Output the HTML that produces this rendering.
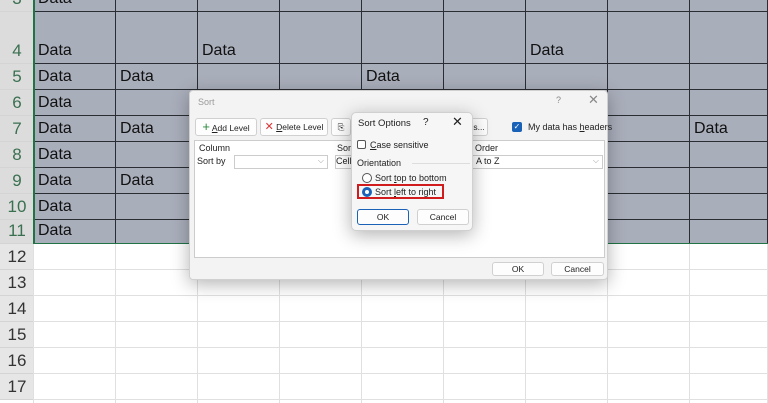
<!DOCTYPE html><html><head><style>
*{margin:0;padding:0;box-sizing:border-box}
body{width:768px;height:403px;overflow:hidden;background:#fff;font-family:"Liberation Sans",sans-serif;position:relative}
.a{position:absolute;white-space:nowrap}
.rh{position:absolute;left:0;width:34px;background:#e6e6e6;color:#333;font-size:17px;text-align:center;border-bottom:1px solid #d4d4d4}
.rh span{position:absolute;bottom:2px;left:0;right:0}
.sel{color:#3a7050;background:#dcdcdc}
.d{position:absolute;font-size:16px;color:#111}
.dlg{position:absolute;background:#f3f3f3;border:1px solid #d0d0d0;border-radius:4px;box-shadow:0 4px 18px rgba(0,0,0,.3);font-size:9px;color:#222}
.btn{position:absolute;background:#fdfdfd;border:1px solid #d0d0d0;border-radius:3px;font-size:8.5px;text-align:center;white-space:nowrap}
</style></head><body>
<div class="a" style="left:34px;top:0;width:734px;height:244px;background:#a9aebb"></div>
<div id="g"></div>
<script>
var rows=[[-14,12,3],[12,64,4],[64,90,5],[90,116,6],[116,142,7],[142,168,8],[168,194,9],[194,220,10],[220,244,11],[244,270,12],[270,296,13],[296,322,14],[322,348,15],[348,374,16],[374,400,17]];
var cols=[34,116,198,280,362,444,526,608,690,768];
var h='';
rows.forEach(function(r){
 var s=r[2]<=11;
 h+='<div class="rh'+(s?' sel':'')+'" style="top:'+r[0]+'px;height:'+(r[1]-r[0])+'px"><span>'+r[2]+'</span></div>';
 h+='<div class="a" style="left:34px;width:734px;top:'+(r[1]-1)+'px;height:1px;background:'+(s?'#2a2d33':'#e0e0e0')+'"></div>';
});
cols.forEach(function(c){
 h+='<div class="a" style="left:'+(c-1)+'px;top:0;width:1px;height:244px;background:#2a2d33"></div>';
 h+='<div class="a" style="left:'+(c-1)+'px;top:244px;width:1px;height:159px;background:#e0e0e0"></div>';
});
var data=[[3,0],[4,0],[4,2],[4,6],[5,0],[5,1],[5,4],[6,0],[7,0],[7,1],[7,8],[8,0],[9,0],[9,1],[10,0],[11,0]];
data.forEach(function(d){var r=rows[d[0]-3];h+='<div class="d" style="left:'+(cols[d[1]]+4)+'px;top:'+(r[1]-22)+'px">Data</div>';});
document.getElementById('g').innerHTML=h;
</script>
<div class="a" style="left:33px;top:0;width:2px;height:244px;background:#217346"></div>
<div class="a" style="left:33px;top:243px;width:735px;height:1px;background:#217346"></div>

<div class="dlg" style="left:189px;top:90px;width:419px;height:190px">
 <div class="a" style="left:8px;top:6px;color:#999">Sort</div>
 <div class="a" style="left:366px;top:4px;color:#888">?</div>
 <div class="a" style="left:398px;top:1px;color:#888;font-size:13px">✕</div>
 <div class="btn" style="left:5px;top:27px;width:62px;height:18px;line-height:16px"><span style="color:#2a8a3a;font-size:13px">+</span> <u>A</u>dd Level</div>
 <div class="btn" style="left:70px;top:27px;width:68px;height:18px;line-height:16px"><span style="color:#d33;font-size:11px">✕</span> <u>D</u>elete Level</div>
 <div class="btn" style="left:141px;top:27px;width:20px;height:18px;line-height:16px">⎘</div>
 <div class="btn" style="left:280px;top:27px;width:18px;height:18px;line-height:16px">s...</div>
 <div class="a" style="left:322px;top:31px;width:10px;height:10px;background:#1a62b8;border-radius:2px;color:#fff;font-size:8px;line-height:10px;text-align:center">✓</div>
 <div class="a" style="left:338px;top:31px">My data has <u>h</u>eaders</div>
 <div class="a" style="left:4px;top:49px;width:411px;height:118px;background:#fff;border:1px solid #ccc">
  <div class="a" style="left:4px;top:2px">Column</div>
  <div class="a" style="left:142px;top:2px">Sort</div>
  <div class="a" style="left:280px;top:2px">Order</div>
  <div class="a" style="left:2px;top:15px">Sort by</div>
  <div class="a" style="left:39px;top:14px;width:94px;height:14px;border:1px solid #ccc;background:#fff"><span class="a" style="right:3px;top:0;color:#999;font-size:8px">⌵</span></div>
  <div class="a" style="left:140px;top:14px;width:24px;height:14px;border:1px solid #ccc">Cell</div>
  <div class="a" style="left:276px;top:14px;width:132px;height:14px;border:1px solid #ccc;padding-left:4px">A to Z<span class="a" style="right:3px;top:0;color:#999;font-size:8px">⌵</span></div>
 </div>
 <div class="btn" style="left:302px;top:171px;width:52px;height:14px;line-height:12px">OK</div>
 <div class="btn" style="left:361px;top:171px;width:53px;height:14px;line-height:12px">Cancel</div>
</div>

<div class="dlg" style="left:351px;top:112px;width:122px;height:119px;background:#f6f6f6;border-radius:5px">
 <div class="a" style="left:6px;top:5px;font-size:9.5px">Sort Options</div>
 <div class="a" style="left:71px;top:4px;font-size:10px">?</div>
 <div class="a" style="left:100px;top:1px;font-size:13px">✕</div>
 <div class="a" style="left:5px;top:27px;width:9px;height:9px;border:1px solid #555;border-radius:2px;background:#fff"></div>
 <div class="a" style="left:18px;top:27px"><u>C</u>ase sensitive</div>
 <div class="a" style="left:5px;top:45px">Orientation</div>
 <div class="a" style="left:60px;top:50px;width:58px;height:1px;background:#ddd"></div>
 <div class="a" style="left:10px;top:60px;width:10px;height:10px;border:1px solid #555;border-radius:50%;background:#fff"></div>
 <div class="a" style="left:23px;top:60px">Sort <u>t</u>op to bottom</div>
 <div class="a" style="left:5px;top:71px;width:87px;height:15px;border:2px solid #d01c1c"></div>
 <div class="a" style="left:10px;top:74px;width:10px;height:10px;border:3px solid #1a62b8;border-radius:50%;background:#fff"></div>
 <div class="a" style="left:23px;top:74px">Sort <u>l</u>eft to right</div>
 <div class="btn" style="left:5px;top:96px;width:52px;height:16px;line-height:14px;border-color:#1a62b8">OK</div>
 <div class="btn" style="left:65px;top:96px;width:52px;height:16px;line-height:14px">Cancel</div>
</div>
</body></html>
